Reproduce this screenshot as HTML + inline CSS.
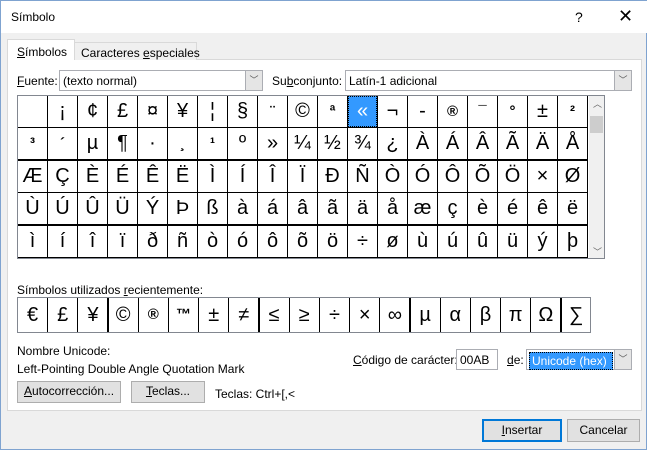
<!DOCTYPE html><html><head><meta charset="utf-8"><style>
*{margin:0;padding:0;box-sizing:border-box}
body{width:647px;height:450px;background:#f0f0f0;font-family:"Liberation Sans",sans-serif;font-size:12px;color:#000;position:relative;overflow:hidden;border:1px solid #7fa3d0}
.a{position:absolute;white-space:nowrap}
.sel{position:absolute;background:#fff;border:1px solid #abadb3}
.dd{position:absolute;right:0;top:0;bottom:0;width:17px;background:#e5e5e5;border-left:1px solid #abadb3;text-align:center;font-size:9px;line-height:18px;color:#555}
.btn{position:absolute;background:#e1e1e1;border:1px solid #adadad;text-align:center;line-height:19px}
.c{position:absolute;width:31px;height:33px;border:1px solid #000;text-align:center;font-size:20px;line-height:31px;background:#fff}
u{text-decoration:underline}
</style></head><body>
<div class="a" style="left:0;top:0;width:647px;height:32px;background:#fff"></div>
<div class="a" style="left:10px;top:9px;font-size:12px">Símbolo</div>
<div class="a" style="left:574px;top:8px;font-size:14px">?</div>
<div class="a" style="left:617px;top:5px;font-size:18px;font-weight:100">✕</div>
<div class="a" style="left:6px;top:58px;width:635px;height:352px;background:#fff;border:1px solid #d9d9d9"></div>
<div class="a" style="left:6px;top:38px;width:68px;height:21px;background:#fff;border:1px solid #d9d9d9;border-bottom:none;padding:5px 0 0 9px"><u>S</u>ímbolos</div>
<div class="a" style="left:73px;top:41px;width:123px;height:18px;background:#f0f0f0;border:1px solid #d9d9d9;border-bottom:none;padding:3px 0 0 6px">Caracteres <u>e</u>speciales</div>
<div class="a" style="left:16px;top:73px"><u>F</u>uente:</div>
<div class="sel" style="left:58px;top:69px;width:204px;height:21px;padding:3px 3px">(texto normal)<div class="dd">﹀</div></div>
<div class="a" style="left:271px;top:73px">Su<u>b</u>conjunto:</div>
<div class="sel" style="left:344px;top:69px;width:287px;height:21px;padding:3px 3px">Latín-1 adicional<div class="dd">﹀</div></div>
<div class="a" style="left:16px;top:94px;width:588px;height:164px;border:1px solid #828790;background:#fff;overflow:hidden" id="g"></div>
<div class="a" style="left:588px;top:95px;width:15px;height:162px;background:#f0f0f0"></div>
<div class="a" style="left:592px;top:96px;font-size:9px;color:#666">︿</div>
<div class="a" style="left:589px;top:115px;width:13px;height:17px;background:#cdcdcd"></div>
<div class="a" style="left:592px;top:244px;font-size:9px;color:#666">﹀</div>
<div class="a" style="left:16px;top:282px">Símbolos utilizados <u>r</u>ecientemente:</div>
<div class="a" style="left:16px;top:296px;width:574px;height:36px;border:1px solid #828790;background:#fff;overflow:hidden" id="r"></div>
<div class="a" style="left:16px;top:343px">Nombre Unicode:</div>
<div class="a" style="left:16px;top:361px">Left-Pointing Double Angle Quotation Mark</div>
<div class="a" style="left:352px;top:352px"><u>C</u>ódigo de carácter:</div>
<div class="sel" style="left:455px;top:348px;width:42px;height:21px;padding:3px 3px">00AB</div>
<div class="a" style="left:506px;top:352px"><u>d</u>e:</div>
<div class="sel" style="left:525px;top:348px;width:106px;height:21px;padding:2px 2px"><span style="background:#3399ff;color:#fff;display:inline-block;width:84px;padding:1px 2px;border:1px dotted #000">Unicode (hex)</span><div class="dd">﹀</div></div>
<div class="btn" style="left:16px;top:380px;width:104px;height:22px"><u>A</u>utocorrección...</div>
<div class="btn" style="left:130px;top:380px;width:74px;height:22px"><u>T</u>eclas...</div>
<div class="a" style="left:214px;top:386px">Teclas: Ctrl+[,&lt;</div>
<div class="btn" style="left:481px;top:418px;width:80px;height:23px;border:2px solid #0078d7;line-height:19px"><u>I</u>nsertar</div>
<div class="btn" style="left:566px;top:418px;width:73px;height:23px;line-height:21px">Cancelar</div>
<script>
var rows=[" ¡¢£¤¥¦§¨©ª«¬-®¯°±²","³´µ¶·¸¹º»¼½¾¿ÀÁÂÃÄÅ","ÆÇÈÉÊËÌÍÎÏÐÑÒÓÔÕÖ×Ø","ÙÚÛÜÝÞßàáâãäåæçèéêë","ìíîïðñòóôõö÷øùúûüýþ"];
var g=document.getElementById('g'),h='';
var small="²³¹®¯°¨´¸ª";
rows.forEach(function(r,i){[...r].forEach(function(ch,j){
var s=(i==0&&j==11);var sm=small.indexOf(ch)>=0;var fs=sm?'15px;font-weight:bold':'20px';
h+='<div class="c" style="left:'+(j*30-1)+'px;top:'+(i*32.4-1)+'px;font-size:'+fs+(s?';background:#3399ff;color:#fff;outline:1px dotted #000;outline-offset:-2px':'')+'">'+ch+'</div>';});});
g.innerHTML=h;
var rc="€£¥©®™±≠≤≥÷×∞µαβπΩ∑",h2='';
[...rc].forEach(function(ch,j){var fs=(ch=='®'||ch=='™')?'15px;font-weight:bold':'20px';h2+='<div class="c" style="left:'+(j*30.2-1)+'px;top:-1px;height:36px;line-height:34px;font-size:'+fs+'">'+ch+'</div>';});
document.getElementById('r').innerHTML=h2;
</script>
</body></html>
